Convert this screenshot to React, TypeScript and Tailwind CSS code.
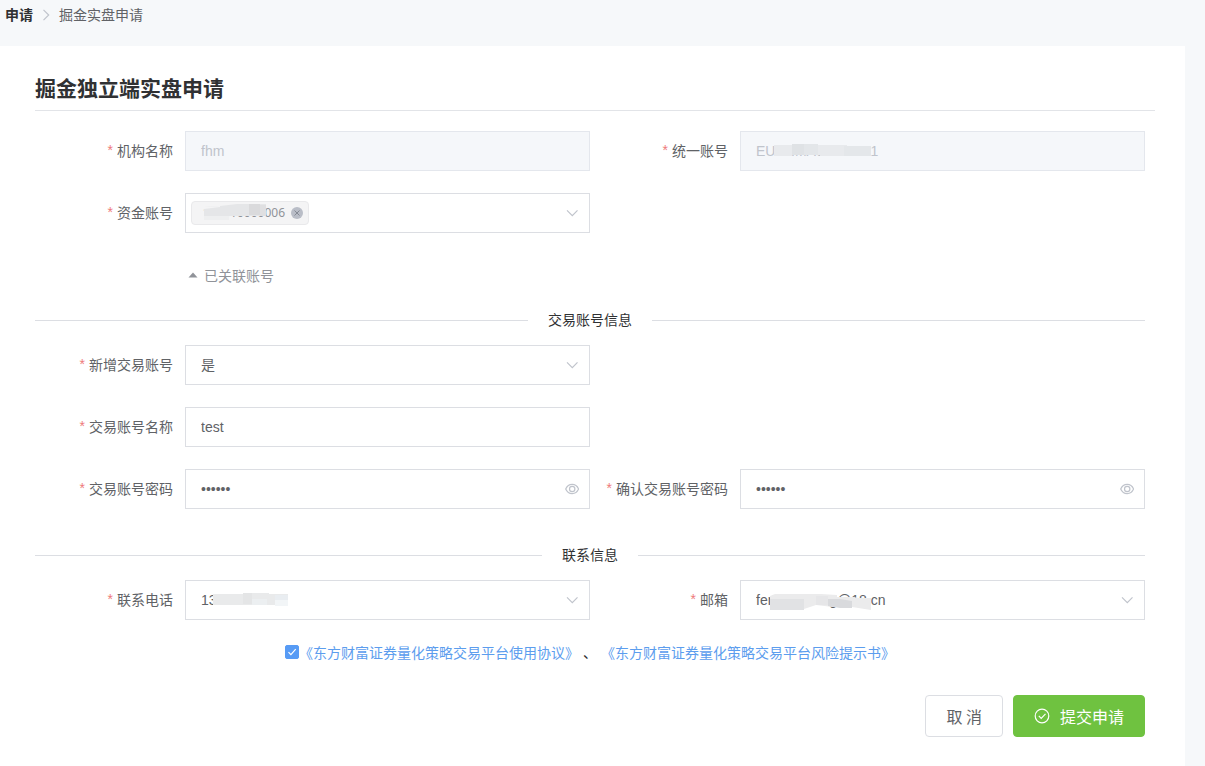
import { useState, type ReactNode } from 'react';

const controlBox =
  'flex h-10 w-full items-center border border-[#dcdee3] bg-white text-sm text-[#606266]';
const fieldText = "font-['Liberation_Sans','Noto_Sans_CJK_SC',sans-serif]";

function ChevronDown() {
  return (
    <svg
      viewBox="0 0 14 14"
      className="pointer-events-none mr-2.5 size-3.5 shrink-0"
      fill="none"
      stroke="#c0c4cc"
      strokeWidth="1.2"
      aria-hidden="true"
    >
      <path d="M2 4.400 7.300 9.600l5.200-5.200" />
    </svg>
  );
}

function EyeIcon() {
  return (
    <svg viewBox="0 0 14 14" className="size-3.5" fill="none" stroke="#c0c4cc" strokeWidth="1.2" aria-hidden="true">
      <path d="M.7 7C2 4 4.400 2.400 7.200 2.400S12.300 4 13.600 7c-1.300 3-3.600 4.600-6.400 4.600S2 10 .7 7Z" />
      <circle cx="7.200" cy="7" r="2.700" />
    </svg>
  );
}

function Field({ id, label, children }: { id: string; label: string; children: ReactNode }) {
  return (
    <div className="flex items-center">
      <label
        htmlFor={id}
        className="flex w-[150px] shrink-0 justify-end gap-1 pr-3 pb-0.5 text-sm whitespace-nowrap text-[#606266]"
      >
        <span className="font-['Liberation_Sans',sans-serif] text-[#ee7b7b]">*</span>
        {label}
      </label>
      <div className="min-w-0 flex-1">{children}</div>
    </div>
  );
}

function Mask({ className, children }: { className: string; children: ReactNode }) {
  return (
    <svg className={`pointer-events-none absolute ${className}`} aria-hidden="true">
      {children}
    </svg>
  );
}

function SelectBox({ id, options }: { id: string; options: string[] }) {
  return (
    <div className={controlBox}>
      <select
        id={id}
        className={`h-full min-w-0 flex-1 appearance-none bg-transparent pl-[15px] outline-none ${fieldText}`}
      >
        {options.map((o) => (
          <option key={o}>{o}</option>
        ))}
      </select>
      <ChevronDown />
    </div>
  );
}

function PasswordBox({ id }: { id: string }) {
  const [visible, setVisible] = useState(false);
  return (
    <div className={controlBox}>
      <input
        id={id}
        type={visible ? 'text' : 'password'}
        defaultValue="123456"
        className={`h-full min-w-0 flex-1 bg-transparent pl-[15px] outline-none ${fieldText}`}
      />
      <button
        type="button"
        aria-label="显示密码"
        onClick={() => setVisible(!visible)}
        className="mr-2.5 shrink-0"
      >
        <EyeIcon />
      </button>
    </div>
  );
}

function Divider({ children }: { children: ReactNode }) {
  return (
    <div className="flex items-center gap-5">
      <span className="h-px flex-1 bg-[#dcdee3]" />
      <h2 className="-my-px pb-0.5 text-sm text-[#303133]">{children}</h2>
      <span className="h-px flex-1 bg-[#dcdee3]" />
    </div>
  );
}

export default function App() {
  return (
    <div className="flex min-h-screen flex-col bg-[#f6f8fa] font-['Noto_Sans_CJK_SC',sans-serif] text-sm text-[#606266]">
      <nav className="flex h-[46px] items-start gap-1.5 px-[5px] pt-1" aria-label="面包屑">
        <a href="#apply" className="font-bold text-[#303133]">
          申请
        </a>
        <svg
          viewBox="0 0 14 14"
          className="mt-1 size-3.5"
          fill="none"
          stroke="#c0c4cc"
          strokeWidth="1.2"
          aria-hidden="true"
        >
          <path d="M4.500 1.800 9.700 7l-5.200 5.200" />
        </svg>
        <span>掘金实盘申请</span>
      </nav>

      <main className="mr-5 flex-1 bg-white pt-[26px] pr-[30px] pb-7 pl-[35px]">
        <h1 className="border-b border-[#e2e4e8] pb-2 text-[21px] leading-[30px] font-bold text-[#303133]">
          掘金独立端实盘申请
        </h1>

        <form className="pt-5 pr-2.5" onSubmit={(e) => e.preventDefault()}>
          <div className="grid grid-cols-2 gap-y-[22px]">
            <Field id="org" label="机构名称">
              <input
                id="org"
                disabled
                defaultValue="fhm"
                className={`h-10 w-full border border-[#e4e7ed] bg-[#f5f7fa] px-[15px] text-sm text-[#c0c4cc] ${fieldText}`}
              />
            </Field>
            <Field id="uid" label="统一账号">
              <div className="relative">
                <input
                  id="uid"
                  disabled
                  defaultValue="EU00IMA00000001"
                  className={`h-10 w-full border border-[#e4e7ed] bg-[#f5f7fa] px-[15px] text-sm text-[#c0c4cc] ${fieldText}`}
                />
                <Mask className="top-3 left-8 h-4 w-[104px]">
                  <path d="M2 2h18V1h26v1h29v1h24v10H48v-1H20v1H2z" fill="#e8eaed" />
                  <path d="M20 1h12v11H20z" fill="#dfe2e5" />
                  <path d="M32 1h14v11H32z" fill="#e3e6e9" />
                  <path d="M72 3h27v10H72z" fill="#e4e7ea" />
                </Mask>
              </div>
            </Field>
            <Field id="fund" label="资金账号">
              <div className={controlBox}>
                <span className="relative ml-[5px] flex h-6 shrink-0 items-center gap-1.5 rounded-sm border border-[#e9e9eb] bg-[#f4f4f5] pr-[5px] pl-2 font-['Noto_Sans',sans-serif] text-xs text-[#909399]">
                  <span className="w-[85px] text-right">100010000006</span>
                  <Mask className="top-0.5 left-2 h-4 w-[68px]">
                    <path d="M4 3 20 2 37 0h29v12H29v4H4z" fill="#e5e6e8" />
                    <path d="M49 0h11v11H49z" fill="#dadadc" />
                    <path d="M60 1h6v11h-6z" fill="#dfdfe1" />
                    <path d="M4 12h25v4H4z" fill="#eeeff0" />
                    <path d="M4 3 20 2v1L4 5z" fill="#f4f4f5" />
                  </Mask>
                  <button type="button" aria-label="移除账号" className="shrink-0">
                    <svg viewBox="0 0 12 12" className="size-3" fill="none" aria-hidden="true">
                      <circle cx="6" cy="6" r="6" fill="#b9bdc7" />
                      <path d="m3.500 3.500 5 5m0-5-5 5" stroke="#858a94" />
                    </svg>
                  </button>
                </span>
                <select
                  id="fund"
                  className="h-full min-w-0 flex-1 appearance-none bg-transparent outline-none"
                >
                  <option value="" />
                </select>
                <ChevronDown />
              </div>
            </Field>
          </div>

          <button type="button" className="mt-8 ml-[150px] flex items-center gap-1.5 pl-[3px] text-[#909399]">
            <svg viewBox="0 0 10 6" className="h-1.5 w-2.5" aria-hidden="true">
              <path d="M5 .5 9.500 5.500H.5z" fill="#909399" />
            </svg>
            已关联账号
          </button>

          <div className="mt-[25px] mb-[15px]">
            <Divider>交易账号信息</Divider>
          </div>

          <div className="grid grid-cols-2 gap-y-[22px]">
            <div className="col-span-2 grid grid-cols-2">
              <Field id="isNew" label="新增交易账号">
                <SelectBox id="isNew" options={['是', '否']} />
              </Field>
            </div>
            <div className="col-span-2 grid grid-cols-2">
              <Field id="accName" label="交易账号名称">
                <input
                  id="accName"
                  defaultValue="test"
                  className={`${controlBox} px-[15px] outline-none ${fieldText}`}
                />
              </Field>
            </div>
            <Field id="pwd" label="交易账号密码">
              <PasswordBox id="pwd" />
            </Field>
            <Field id="pwd2" label="确认交易账号密码">
              <PasswordBox id="pwd2" />
            </Field>
          </div>

          <div className="mt-9 mb-[15px]">
            <Divider>联系信息</Divider>
          </div>

          <div className="grid grid-cols-2">
            <Field id="phone" label="联系电话">
              <div className="relative">
                <SelectBox id="phone" options={['13000000000']} />
                <Mask className="top-3 left-7 h-4 w-[76px]">
                  <path d="M0 2h30V1h26v1h19v12h-13v-1H0z" fill="#e9eaeb" />
                  <path d="M30 1h9v11h-9z" fill="#e4e5e6" />
                  <path d="M39 7h15v6H39z" fill="#eceff1" />
                  <path d="M62 3h13v5H62z" fill="#e9edf1" />
                  <path d="M62 8h13v6H62z" fill="#f2f5f7" />
                </Mask>
              </div>
            </Field>
            <Field id="email" label="邮箱">
              <div className="relative">
                <SelectBox id="email" options={['feng0000x0g@18.cn']} />
                <Mask className="top-3 left-[30px] h-5 w-[101px]">
                  <path d="M0 4 5 2h46l16 1v2h16l6 1h12v12l-19-3H63l-17-2-12 4-4 1H0z" fill="#ebebec" />
                  <path d="M0 7h34v11H0z" fill="#e1e2e4" />
                  <path d="M58 7h12l12 2v7H70l-12-2z" fill="#d9dadd" />
                  <path d="M46 4h12v9H46z" fill="#e6e6e8" />
                </Mask>
              </div>
            </Field>
          </div>

          <div className="mt-[22px] flex items-center justify-center leading-5">
            <label className="relative flex" aria-label="同意协议">
              <input
                type="checkbox"
                defaultChecked
                className="peer size-3.5 appearance-none rounded-xs border border-[#dcdee3] checked:border-[#579bf5] checked:bg-[#579bf5]"
              />
              <svg
                viewBox="0 0 14 14"
                className="pointer-events-none absolute inset-0 hidden size-3.5 peer-checked:block"
                fill="none"
                stroke="#fff"
                strokeWidth="1.2"
                aria-hidden="true"
              >
                <path d="m3.500 7.200 2.400 2.400 4.800-5.400" />
              </svg>
            </label>
            <a href="#agreement" className="text-[#5c9dee]">
              《东方财富证券量化策略交易平台使用协议》
            </a>
            <span className="mx-1 text-[#303133]">、</span>
            <a href="#risk" className="text-[#5c9dee]">
              《东方财富证券量化策略交易平台风险提示书》
            </a>
          </div>

          <div className="mt-[33px] flex justify-end gap-2.5 text-base leading-5">
            <button
              type="button"
              className="h-[42px] rounded border border-[#dcdee3] bg-white px-5 text-[#606266]"
            >
              取 消
            </button>
            <button
              type="submit"
              className="flex h-[42px] items-center gap-2.5 rounded border border-[#6fc240] bg-[#6fc240] px-5 text-white"
            >
              <svg viewBox="0 0 16 16" className="size-4" fill="none" stroke="#fff" aria-hidden="true">
                <circle cx="8" cy="8" r="6.800" strokeWidth="1.200" />
                <path d="m4.800 7.900 2.400 2.500 4.300-4.500" strokeWidth="1.200" />
              </svg>
              提交申请
            </button>
          </div>
        </form>
      </main>
    </div>
  );
}
